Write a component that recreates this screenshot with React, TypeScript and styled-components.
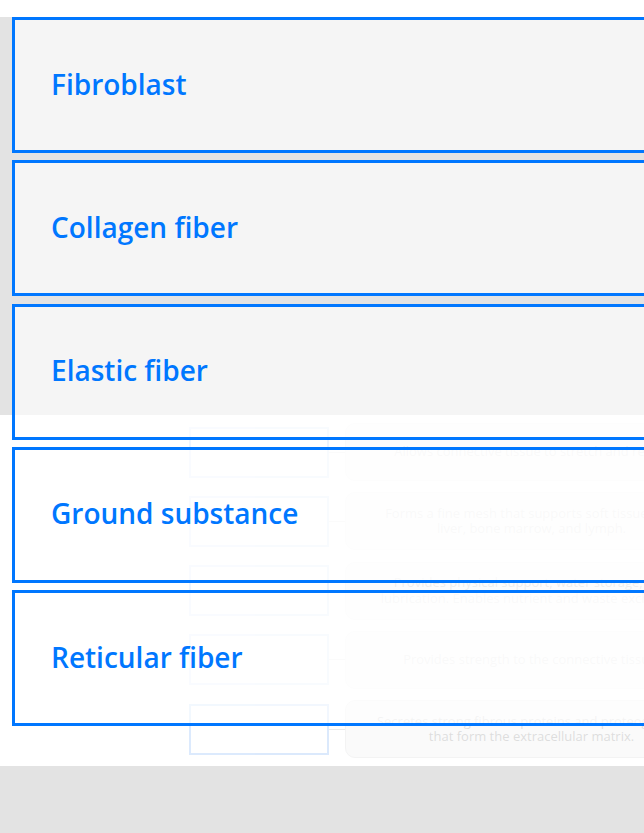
import React from 'react';
import styled, { createGlobalStyle } from 'styled-components';

const terms = ['Fibroblast', 'Collagen fiber', 'Elastic fiber', 'Ground substance', 'Reticular fiber'];

const rows = [
  { text: 'Allows connective tissue to stretch and recoil.', fade: 0.1 },
  { text: 'Forms a fine mesh that supports soft tissues like liver, bone marrow, and lymph.', fade: 0.1 },
  { text: 'Provides physical support, water storage, and lubrication. Enables nutrient and waste exchange.', fade: 0.1 },
  { text: 'Provides strength to the connective tissue.', fade: 0.1 },
  { text: 'Secretes strong fibrous proteins and proteoglycans that form the extracellular matrix.', fade: 0.2 },
];

const GlobalStyle = createGlobalStyle`
  html, body {
    margin: 0;
    padding: 0;
    background: #e3e3e3;
    font-family: "Open Sans", "Noto Sans", sans-serif;
  }
  * {
    box-sizing: border-box;
  }
`;

export default function App() {
  return (
    <Page>
      <GlobalStyle />
      <TopStrip />
      <Stage />
      <Board>
        {rows.map((row, i) => (
          <MatchRow key={i} fade={row.fade}>
            <Target />
            <Connector />
            <Description>{row.text}</Description>
          </MatchRow>
        ))}
      </Board>
      <DragLayer>
        {terms.map((t) => (
          <TermCard key={t}>{t}</TermCard>
        ))}
      </DragLayer>
    </Page>
  );
}

const Page = styled.div`
  position: relative;
  width: 100%;
  height: 833px;
  overflow: hidden;
  background: #e3e3e3;
`;

const TopStrip = styled.div`
  height: 17px;
  background: #ffffff;
`;

const Stage = styled.div`
  height: 398px;
  background: #e3e3e3;
`;

const Board = styled.div`
  height: 351px;
  background: #ffffff;
  padding: 8px 0 0 189px;
  display: flex;
  flex-direction: column;
  gap: 11.3px;
`;

const MatchRow = styled.div<{ fade: number }>`
  display: flex;
  align-items: center;
  height: 58px;
  opacity: ${(p) => p.fade};
`;

const Target = styled.div`
  width: 140px;
  height: 51px;
  flex-shrink: 0;
  border: 2px solid #5096f5;
`;

const Connector = styled.div`
  width: 16px;
  height: 1px;
  flex-shrink: 0;
  background: #9a9a9a;
`;

const Description = styled.div`
  width: 373px;
  height: 58px;
  flex-shrink: 0;
  display: flex;
  align-items: center;
  justify-content: center;
  padding: 0 24px;
  border: 1px solid #c8c8c8;
  border-radius: 10px;
  background: #e8eaeb;
  color: #5a5a5a;
  font-size: 13px;
  line-height: 1.2;
  text-align: center;
`;

const DragLayer = styled.div`
  position: absolute;
  top: 17px;
  left: 12px;
  width: 720px;
  display: flex;
  flex-direction: column;
  gap: 7.25px;
`;

const TermCard = styled.div`
  height: 136px;
  display: flex;
  align-items: center;
  padding: 0 0 3px 36px;
  border: 3px solid #0077ff;
  background: rgba(255, 255, 255, 0.64);
  color: #0077ff;
  font-size: 28px;
  font-weight: 600;
`;
